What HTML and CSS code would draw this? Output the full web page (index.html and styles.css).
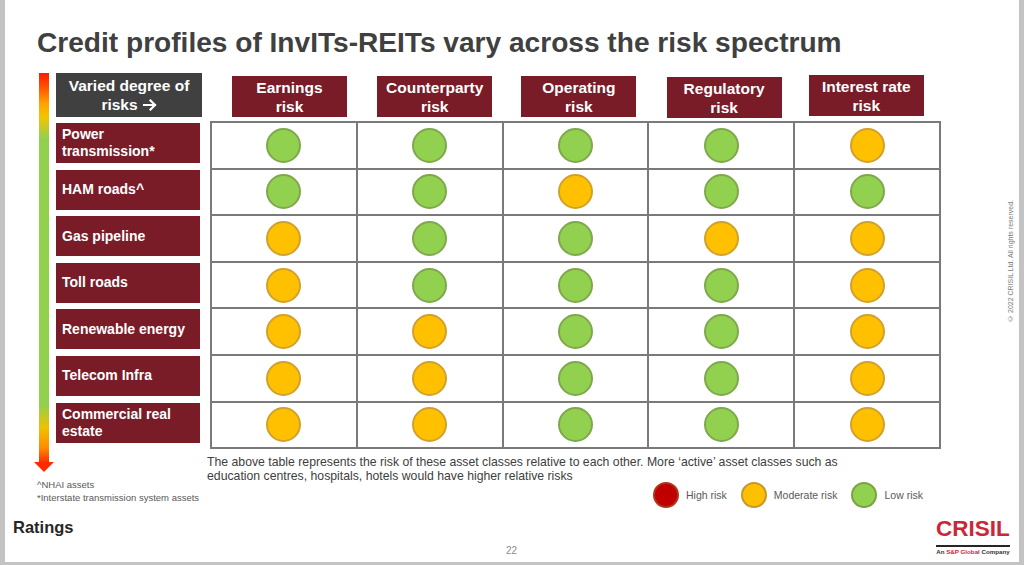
FILE: index.html
```html
<!DOCTYPE html>
<html>
<head>
<meta charset="utf-8">
<link rel="stylesheet" href="styles.css">
</head>
<body>
<div class="slide">
  <h1 class="title">Credit profiles of InvITs-REITs vary across the risk spectrum</h1>
  <div class="main">
    <div class="left">
      <div class="left-top">
        <svg class="arrow" width="20" height="399" viewBox="0 0 20 399">
          <defs>
            <linearGradient id="rg" x1="0" y1="0" x2="0" y2="399" gradientUnits="userSpaceOnUse">
              <stop offset="0" stop-color="#ff1a00"/>
              <stop offset="0.04" stop-color="#ff5a00"/>
              <stop offset="0.075" stop-color="#ffa000"/>
              <stop offset="0.11" stop-color="#f5c400"/>
              <stop offset="0.165" stop-color="#92d050"/>
              <stop offset="0.83" stop-color="#92d050"/>
              <stop offset="0.89" stop-color="#f0c000"/>
              <stop offset="0.94" stop-color="#ff8a00"/>
              <stop offset="0.975" stop-color="#ff3000"/>
              <stop offset="1" stop-color="#ff2000"/>
            </linearGradient>
          </defs>
          <rect x="5" y="0" width="10" height="390" fill="url(#rg)"/>
          <polygon points="0,389 20,389 10,399" fill="#ff2a00"/>
        </svg>
        <div class="labels">
          <div class="corner">Varied degree of<br><span class="risks">risks <svg class="rarrow" width="14" height="12" viewBox="0 0 14 12"><path d="M1 6 H12 M7.5 1.5 L12 6 L7.5 10.5" fill="none" stroke="#ffffff" stroke-width="2.2" stroke-linecap="square"/></svg></span></div>
          <div class="label-row"><div class="label">Power<br>transmission*</div></div>
          <div class="label-row"><div class="label">HAM roads^</div></div>
          <div class="label-row"><div class="label">Gas pipeline</div></div>
          <div class="label-row"><div class="label">Toll roads</div></div>
          <div class="label-row"><div class="label">Renewable energy</div></div>
          <div class="label-row"><div class="label">Telecom Infra</div></div>
          <div class="label-row"><div class="label">Commercial real<br>estate</div></div>
        </div>
      </div>
      <div class="footnotes">
        <p>^NHAI assets</p>
        <p>*Interstate transmission system assets</p>
      </div>
    </div>
    <div class="right">
      <div class="heads">
        <div class="head">Earnings<br>risk</div>
        <div class="head">Counterparty<br>risk</div>
        <div class="head">Operating<br>risk</div>
        <div class="head">Regulatory<br>risk</div>
        <div class="head">Interest rate<br>risk</div>
      </div>
      <div class="grid">
        <div class="cell"><span class="dot g"></span></div>
        <div class="cell"><span class="dot g"></span></div>
        <div class="cell"><span class="dot g"></span></div>
        <div class="cell"><span class="dot g"></span></div>
        <div class="cell"><span class="dot a"></span></div>

        <div class="cell"><span class="dot g"></span></div>
        <div class="cell"><span class="dot g"></span></div>
        <div class="cell"><span class="dot a"></span></div>
        <div class="cell"><span class="dot g"></span></div>
        <div class="cell"><span class="dot g"></span></div>

        <div class="cell"><span class="dot a"></span></div>
        <div class="cell"><span class="dot g"></span></div>
        <div class="cell"><span class="dot g"></span></div>
        <div class="cell"><span class="dot a"></span></div>
        <div class="cell"><span class="dot a"></span></div>

        <div class="cell"><span class="dot a"></span></div>
        <div class="cell"><span class="dot g"></span></div>
        <div class="cell"><span class="dot g"></span></div>
        <div class="cell"><span class="dot g"></span></div>
        <div class="cell"><span class="dot a"></span></div>

        <div class="cell"><span class="dot a"></span></div>
        <div class="cell"><span class="dot a"></span></div>
        <div class="cell"><span class="dot g"></span></div>
        <div class="cell"><span class="dot g"></span></div>
        <div class="cell"><span class="dot a"></span></div>

        <div class="cell"><span class="dot a"></span></div>
        <div class="cell"><span class="dot a"></span></div>
        <div class="cell"><span class="dot g"></span></div>
        <div class="cell"><span class="dot g"></span></div>
        <div class="cell"><span class="dot a"></span></div>

        <div class="cell"><span class="dot a"></span></div>
        <div class="cell"><span class="dot a"></span></div>
        <div class="cell"><span class="dot g"></span></div>
        <div class="cell"><span class="dot g"></span></div>
        <div class="cell"><span class="dot a"></span></div>
      </div>
      <p class="note">The above table represents the risk of these asset classes relative to each other. More &#8216;active&#8217; asset classes such as<br>education centres, hospitals, hotels would have higher relative risks</p>
      <div class="legend">
        <span class="ldot r"></span><span class="ltext">High risk</span>
        <span class="ldot a"></span><span class="ltext">Moderate risk</span>
        <span class="ldot g"></span><span class="ltext">Low risk</span>
      </div>
    </div>
    <div class="copyright">&#169; 2022 CRISIL Ltd. All rights reserved.</div>
  </div>
  <div class="footer">
    <div class="ratings">Ratings</div>
    <div class="page">22</div>
    <div class="logo">
      <div class="crisil">CRISIL</div>
      <div class="rule"></div>
      <div class="sub">An <span class="red">S&amp;P Global</span> Company</div>
    </div>
  </div>
</div>
</body>
</html>
```

FILE: styles.css
```css
* { box-sizing: border-box; }
html, body { margin: 0; padding: 0; }
body {
  background: #c3c3c3;
  width: 1024px;
  height: 565px;
  overflow: hidden;
  font-family: "Liberation Sans", Arial, sans-serif;
}
.slide {
  margin-left: 5px;
  width: 1014px;
  height: 562px;
  background: #ffffff;
  display: flex;
  flex-direction: column;
}
.title {
  margin: 27px 0 0 32px;
  font-size: 28.1px;
  line-height: 32px;
  font-weight: bold;
  color: #404040;
  white-space: nowrap;
}
.main {
  display: flex;
  margin-top: 14px;
  padding-left: 29px;
}
.left { display: flex; flex-direction: column; }
.left-top { display: flex; }
.arrow { display: block; flex: none; }
.labels {
  margin-left: 2px;
  width: 146px;
  display: flex;
  flex-direction: column;
}
.corner {
  height: 44px;
  margin-bottom: 4px;
  background: #404040;
  color: #ffffff;
  font-weight: bold;
  font-size: 15.5px;
  line-height: 19px;
  text-align: center;
  display: flex;
  flex-direction: column;
  align-items: center;
  justify-content: center;
}
.risks {
  display: flex;
  align-items: center;
  gap: 5px;
}
.rarrow { display: block; margin-top: 1px; }
.label-row {
  height: 46.6px;
  padding-top: 2px;
}
.label {
  width: 144px;
  height: 40px;
  background: #7a1c28;
  color: #ffffff;
  font-weight: bold;
  font-size: 14px;
  line-height: 17px;
  padding-left: 6px;
  display: flex;
  align-items: center;
}
.footnotes {
  margin: 6px 0 0 3px;
  font-size: 9.5px;
  line-height: 13px;
  color: #595959;
}
.footnotes p { margin: 0; white-space: nowrap; }
.right {
  margin-left: 8px;
  width: 731px;
  display: flex;
  flex-direction: column;
}
.heads {
  height: 48px;
  display: grid;
  grid-template-columns: repeat(5, 1fr);
  align-items: start;
  padding-top: 3px;
}
.head {
  width: 115px;
  height: 41px;
  background: #7a1c28;
  color: #ffffff;
  font-weight: bold;
  font-size: 15.5px;
  line-height: 19px;
  text-align: center;
  display: flex;
  align-items: center;
  justify-content: center;
}
.head:nth-child(1) { margin-left: 22px; }
.head:nth-child(2) { margin-left: 21px; }
.head:nth-child(3) { margin-left: 19px; }
.head:nth-child(4) { margin-left: 18px; margin-top: 1px; }
.head:nth-child(5) { margin-left: 14px; margin-top: -1px; }
.grid {
  display: grid;
  grid-template-columns: repeat(5, 1fr);
  border-top: 2px solid #7a7a7a;
  border-left: 2px solid #7a7a7a;
}
.cell {
  height: 46.6px;
  border-right: 2px solid #7a7a7a;
  border-bottom: 2px solid #7a7a7a;
  display: flex;
  align-items: center;
  justify-content: center;
}
.dot {
  width: 35px;
  height: 35px;
  border-radius: 50%;
  display: block;
}
.dot.g { background: #92d050; border: 2px solid #7fa84c; }
.dot.a { background: #ffc000; border: 2px solid #d2a12c; }
.note {
  margin: 6px 0 0 -3px;
  font-size: 12.25px;
  line-height: 14px;
  color: #404040;
  white-space: nowrap;
}
.legend {
  display: flex;
  align-items: center;
  margin: -1px 0 0 443px;
}
.ldot {
  width: 26px;
  height: 26px;
  border-radius: 50%;
  flex: none;
}
.ldot.r { background: #c00000; border: 2px solid #b0331e; }
.ldot.a { background: #ffc000; border: 2px solid #c9962b; }
.ldot.g { background: #92d050; border: 2px solid #7aa345; }
.ltext {
  margin: 0 14px 0 7px;
  font-size: 10.5px;
  color: #595959;
  white-space: nowrap;
}
.copyright {
  margin: 127px 4px 0 auto;
  align-self: flex-start;
  writing-mode: vertical-rl;
  transform: rotate(180deg);
  font-size: 7px;
  line-height: 8px;
  color: #7a7a7a;
  white-space: nowrap;
}
.footer {
  margin-top: auto;
  height: 48px;
  display: grid;
  grid-template-columns: 1fr auto 1fr;
  padding: 0 9px 0 8px;
}
.ratings {
  margin-top: 3px;
  font-size: 16.5px;
  line-height: 20px;
  font-weight: bold;
  color: #262626;
}
.page {
  margin-top: 31px;
  font-size: 10px;
  line-height: 12px;
  color: #8c8c8c;
}
.logo {
  justify-self: end;
  width: 74px;
  display: flex;
  flex-direction: column;
}
.crisil {
  margin-top: 3px;
  font-size: 22.5px;
  line-height: 24px;
  font-weight: bold;
  color: #cf2637;
  text-align: center;
}
.rule {
  margin-top: 4px;
  height: 2px;
  background: #262626;
}
.sub {
  margin-top: 1px;
  font-size: 6.2px;
  line-height: 8px;
  font-weight: bold;
  color: #333333;
  text-align: center;
  white-space: nowrap;
}
.sub .red { color: #cf2637; }
```
